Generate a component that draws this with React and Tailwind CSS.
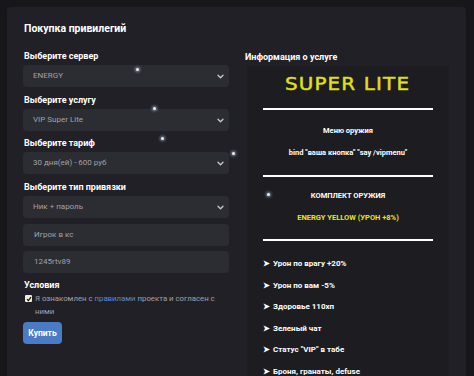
import React from "react";

function Chevron() {
  return (
    <svg width="7" height="5" viewBox="0 0 7 5" className="shrink-0">
      <path d="M1 1.2 L3.5 3.7 L6 1.2" fill="none" stroke="#c9c9d0" strokeWidth="1.3" strokeLinecap="round" strokeLinejoin="round" />
    </svg>
  );
}

function Select({ value }) {
  return (
    <div className="h-[22px] rounded-[4px] bg-[#2c2c33] flex items-center justify-between pl-[10px] pr-[5px] text-[8px] text-[#a2a2aa]">
      <span>{value}</span>
      <Chevron />
    </div>
  );
}

function Input({ value }) {
  return (
    <div className="h-[22px] rounded-[4px] bg-[#2c2c33] flex items-center pl-[11px] text-[8px] text-[#a2a2aa]">
      {value}
    </div>
  );
}

function Label({ children }) {
  return <div className="h-[14px] leading-[14px] text-[9px] font-bold text-white pl-[1px] mb-[2px]">{children}</div>;
}

function Dot({ className }) {
  return <div className={"absolute w-[3px] h-[3px] rounded-full bg-[#e8eef5] shadow-[0_0_3px_1px_rgba(200,220,240,0.6)] " + className} />;
}

export default function App() {
  const items = [
    "Урон по врагу +20%",
    "Урон по вам -5%",
    "Здоровье 110хп",
    "Зеленый чат",
    'Статус "VIP" в табе',
    "Броня, гранаты, defuse",
  ];
  return (
    <div className="relative w-[474px] h-[376px] overflow-hidden bg-[#17171b] pt-[7px] pl-[7px] font-['Roboto',sans-serif]">
      <div className="w-[459px] h-[380px] rounded-[4px] bg-[#202026] pt-[13px] pl-[16px]">
        <div className="h-[18px] leading-[18px] text-[10.5px] font-bold text-white pl-[1px]">Покупка привилегий</div>
        <div className="flex mt-[11px]">
          <div className="w-[206px] flex flex-col">
            <Label>Выберите сервер</Label>
            <Select value="ENERGY" />
            <div className="h-[6px]" />
            <Label>Выберите услугу</Label>
            <Select value="VIP Super Lite" />
            <div className="h-[5px]" />
            <Label>Выберите тариф</Label>
            <Select value="30 дня(ей) - 600 руб" />
            <div className="h-[6px]" />
            <Label>Выберите тип привязки</Label>
            <Select value="Ник + пароль" />
            <div className="h-[6px]" />
            <Input value="Игрок в кс" />
            <div className="h-[5px]" />
            <Input value="1245rtv89" />
            <div className="h-[5px]" />
            <Label>Условия</Label>
            <div className="-mt-[2px] flex items-start gap-[3px] pl-[2px] text-[7.8px] leading-[13px] text-[#a2a2aa]">
              <div className="mt-[3px] w-[7px] h-[7px] shrink-0 rounded-[1px] bg-[#f2ecd2] flex items-center justify-center">
                <svg width="6" height="6" viewBox="0 0 6 6">
                  <path d="M1 3.2 L2.4 4.6 L5 1.2" fill="none" stroke="#111" strokeWidth="1.2" />
                </svg>
              </div>
              <p className="w-[185px]">
                Я ознакомлен с <span className="text-[#5b8ad6]">правилами</span> проекта и согласен с ними
              </p>
            </div>
            <div className="mt-[4px] w-[39px] h-[22px] rounded-[4px] bg-[#4a7bc6] flex items-center justify-center text-[8.5px] font-bold text-white">
              Купить
            </div>
          </div>
          <div className="ml-[16px] w-[206px] flex flex-col">
            <div className="h-[14px] leading-[14px] text-[9px] font-bold text-white mt-[1px]">Информация о услуге</div>
            <div className="ml-[2px] mt-[2px] w-[202px] h-[320px] bg-[#1c1c21] flex flex-col">
              <div className="h-[36px] flex items-center justify-center">
                <span className="text-[17px] leading-[17px] text-[#e2e21c] tracking-[1px] scale-x-[1.17] [-webkit-text-stroke:0.5px_#d8d818] font-['DejaVu_Sans',sans-serif]">SUPER LITE</span>
              </div>
              <div className="mx-[16px] h-[2px] bg-white mt-[6px]" />
              <div className="flex flex-col items-center text-[7.5px] font-bold text-white">
                <div className="mt-[15px] h-[12px] leading-[12px]">Меню оружия</div>
                <div className="mt-[10px] h-[12px] leading-[12px]">bind "ваша кнопка" "say /vipmenu"</div>
              </div>
              <div className="mx-[16px] h-[2px] bg-white mt-[16px]" />
              <div className="flex flex-col items-center text-[7.5px] font-bold">
                <div className="mt-[13px] h-[12px] leading-[12px] text-white">КОМПЛЕКТ ОРУЖИЯ</div>
                <div className="mt-[10px] h-[12px] leading-[12px] text-[#e6e61a]">ENERGY YELLOW (УРОН +8%)</div>
              </div>
              <div className="mx-[16px] h-[2px] bg-white mt-[15px]" />
              <div className="flex flex-col pl-[16px] mt-[17px] gap-[9.5px] text-[8px] font-bold text-white">
                {items.map((t) => (
                  <div key={t} className="h-[12px] leading-[12px] flex items-center gap-[3px]">
                    <span>➤</span>
                    <span>{t}</span>
                  </div>
                ))}
              </div>
            </div>
          </div>
        </div>
      </div>
      <Dot className="left-[136px] top-[68px]" />
      <Dot className="left-[153px] top-[107px]" />
      <Dot className="left-[161px] top-[137px]" />
      <Dot className="left-[232px] top-[152px]" />
      <Dot className="left-[267px] top-[193px]" />
    </div>
  );
}
